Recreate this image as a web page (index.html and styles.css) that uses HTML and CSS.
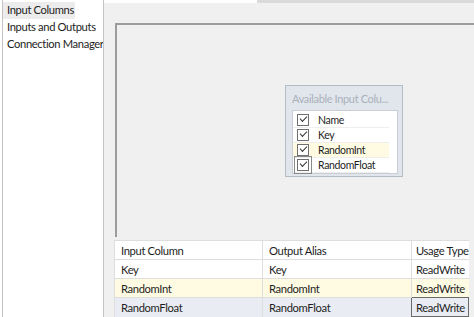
FILE: index.html
```html
<!DOCTYPE html>
<html lang="en">
<head>
    <meta charset="UTF-8">
    <title>Advanced Editor</title>
    <link rel="stylesheet" href="styles.css">
</head>
<body>
<div class="editor">
    <div class="sidebar">
        <div class="navItem selected">Input Columns</div>
        <div class="navItem">Inputs and Outputs</div>
        <div class="navItem">Connection Managers</div>
    </div>
    <div class="main">
        <div class="tabStrip">
            <div class="tabActive"></div>
            <div class="tabRest"></div>
        </div>
        <div class="canvas">
            <div class="popup">
                <div class="popupTitle">Available Input Colu...</div>
                <div class="colList">
                    <div class="colRow header"><span class="check"></span>Name</div>
                    <div class="colRow"><span class="check"></span>Key</div>
                    <div class="colRow hover"><span class="check"></span>RandomInt</div>
                    <div class="colRow focus"><span class="check boxed"></span>RandomFloat</div>
                </div>
            </div>
        </div>
        <table class="grid">
            <tr>
                <th>Input Column</th>
                <th>Output Alias</th>
                <th>Usage Type</th>
            </tr>
            <tr>
                <td>Key</td>
                <td>Key</td>
                <td>ReadWrite</td>
            </tr>
            <tr class="hover">
                <td>RandomInt</td>
                <td>RandomInt</td>
                <td>ReadWrite</td>
            </tr>
            <tr class="current">
                <td>RandomFloat</td>
                <td>RandomFloat</td>
                <td class="cellFocus">ReadWrite</td>
            </tr>
        </table>
    </div>
</div>
</body>
</html>
```
FILE: styles.css
```css
html, body {
    margin: 0;
    height: 100%;
    overflow: hidden;
}

body {
    font-family: Lato, "Liberation Sans", sans-serif;
    font-size: 11.2px;
    letter-spacing: -0.35px;
    color: #1e1e1e;
    background: white;
}

.editor {
    display: flex;
    height: 317px;
}

.sidebar {
    width: 100px;
    margin-left: 2px;
    border-left: 1px solid #c4c4c4;
    border-right: 1px solid #c4c4c4;
    background: white;
    padding-top: 2px;
    overflow: hidden;
    white-space: nowrap;
}

.navItem {
    height: 17px;
    line-height: 16px;
    padding-left: 4px;
}

.navItem.selected {
    background: #ececec;
    width: 68px;
}

.main {
    flex: 1;
    background: #f0f0f0;
    display: flex;
    flex-direction: column;
}

.tabStrip {
    display: flex;
    height: 3px;
}

.tabActive {
    width: 153px;
    background: white;
}

.tabRest {
    flex: 1;
    background: #dadada;
}

.canvas {
    position: relative;
    margin: 20px 0 0 11px;
    height: 213px;
    border-top: 2px solid #9c9c9c;
    border-left: 2px solid #9c9c9c;
}

.popup {
    position: absolute;
    left: 168px;
    top: 60px;
    width: 118px;
    height: 92px;
    border: 1px solid #b4bcc6;
    background: #e1e6ec;
    box-sizing: border-box;
    padding: 3px 4px 0 6px;
}

.popupTitle {
    color: #a9b1bb;
    height: 21px;
    line-height: 20px;
    white-space: nowrap;
    font-size: 11px;
}

.colList {
    background: white;
    border: 1px solid #c9ced5;
    width: 104px;
    padding-top: 2px;
}

.colRow {
    display: flex;
    align-items: center;
    height: 14px;
    font-size: 10.5px;
    border-bottom: 1px solid #eeeeee;
    margin-right: 8px;
}

.colRow.hover {
    background: #fffbe3;
}

.check {
    width: 12px;
    height: 12px;
    margin: 0 9px 0 4px;
    border: 1px solid #6f6f6f;
    box-sizing: border-box;
    position: relative;
    background: white;
}

.check::after {
    content: "";
    position: absolute;
    left: 2px;
    top: 1px;
    width: 6px;
    height: 3px;
    border-left: 1px solid #333;
    border-bottom: 1px solid #333;
    transform: rotate(-45deg);
}

.check.boxed {
    outline: 1px solid #8a8a8a;
    outline-offset: 2px;
}

.grid {
    margin: 3px 0 0 10px;
    width: 355px;
    border-collapse: collapse;
    background: white;
    table-layout: fixed;
}

.grid th, .grid td {
    height: 18px;
    padding: 0 0 0 6px;
    text-align: left;
    font-weight: normal;
    border-top: 1px solid #dedede;
    border-left: 1px solid #dedede;
    white-space: nowrap;
    overflow: hidden;
}

.grid th:nth-child(1) { width: 141px; }
.grid th:nth-child(2) { width: 142px; }
.grid th:nth-child(3), .grid td:nth-child(3) { padding-left: 4px; }

.grid tr.hover td {
    background: #fffbe3;
}

.grid tr.current td {
    background: #e9edf3;
}

.grid td.cellFocus {
    border: 1px solid #6a6a6a;
    background: #f4f4f4;
}
```
